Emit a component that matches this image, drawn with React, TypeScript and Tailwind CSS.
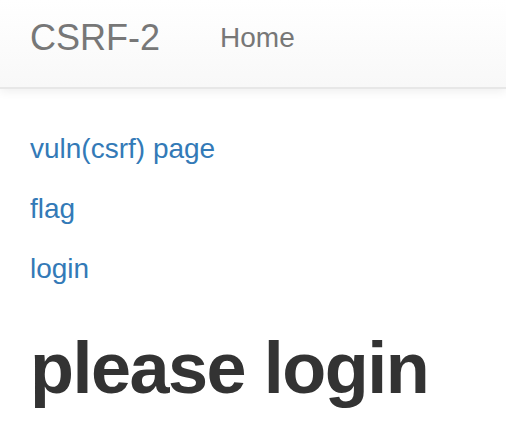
export default function App() {
  const links = ['vuln(csrf) page', 'flag', 'login'];

  return (
    <div className="min-h-[438px] bg-white font-['Liberation_Sans',Arial,sans-serif] text-[#333]">
      <nav className="relative flex h-[89px] items-center border-b-2 border-[#e7e7e7] bg-linear-to-b from-white to-[#f8f8f8] pb-[11px] shadow-[0_2px_10px_rgba(0,0,0,0.075)]">
        <a href="#" className="pl-[30px] pr-[30px] text-[36px] leading-[40px] text-[#777]">
          CSRF-2
        </a>
        <a href="#" className="px-[30px] text-[28px] leading-[40px] text-[#777]">
          Home
        </a>
      </nav>

      <main className="px-[30px] pt-[40px]">
        {links.map((label) => (
          <p key={label} className="mb-[20px] text-[28px] leading-[40px]">
            <a href="#" className="text-[#337ab7]">
              {label}
            </a>
          </p>
        ))}
        <h1 className="mt-[40px] text-[72px] font-bold leading-[1.1] tracking-[-1.5px] text-[#333]">
          please login
        </h1>
      </main>
    </div>
  );
}
